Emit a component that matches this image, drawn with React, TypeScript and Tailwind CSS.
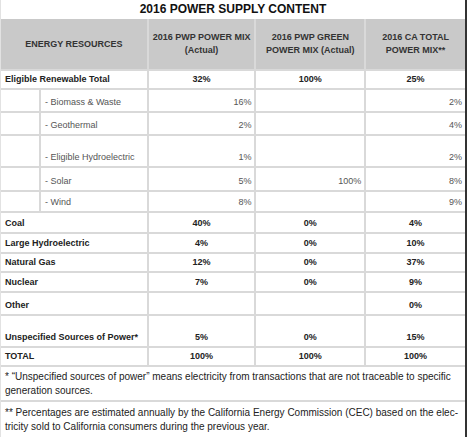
import React from "react";

type Row = {
  label: string;
  sub?: boolean;
  h: number;
  v: [string, string, string];
};

const rows: Row[] = [
  { label: "Eligible Renewable Total", h: 19, v: ["32%", "100%", "25%"] },
  { label: "- Biomass & Waste", sub: true, h: 23, v: ["16%", "", "2%"] },
  { label: "- Geothermal", sub: true, h: 23, v: ["2%", "", "4%"] },
  { label: "- Eligible Hydroelectric", sub: true, h: 32, v: ["1%", "", "2%"] },
  { label: "- Solar", sub: true, h: 24, v: ["5%", "100%", "8%"] },
  { label: "- Wind", sub: true, h: 21, v: ["8%", "", "9%"] },
  { label: "Coal", h: 21, v: ["40%", "0%", "4%"] },
  { label: "Large Hydroelectric", h: 20, v: ["4%", "0%", "10%"] },
  { label: "Natural Gas", h: 19, v: ["12%", "0%", "37%"] },
  { label: "Nuclear", h: 20, v: ["7%", "0%", "9%"] },
  { label: "Other", h: 23, v: ["", "", "0%"] },
  { label: "Unspecified Sources of Power*", h: 32, v: ["5%", "0%", "15%"] },
  { label: "TOTAL", h: 19, v: ["100%", "100%", "100%"] },
];

const line = "border-[#d9d9d9]";

const DataRow = ({ row }: { row: Row }) => {
  const cell = `flex items-end pb-[3px] leading-[11px] border-r-2 ${line}`;
  const valCls = row.sub
    ? "justify-end pr-[3px] text-[#555] font-normal"
    : "justify-center text-[#222] font-bold";
  return (
    <div className={`flex border-b-2 ${line}`} style={{ height: row.h }}>
      {row.sub ? (
        <>
          <div className={`w-[40px] ${cell}`} />
          <div className={`w-[108px] pl-[4px] text-[#555] ${cell}`}>{row.label}</div>
        </>
      ) : (
        <div className={`w-[148px] pl-[4px] font-bold text-[#222] ${cell}`}>{row.label}</div>
      )}
      <div className={`w-[108px] ${cell} ${valCls}`}>{row.v[0]}</div>
      <div className={`w-[110px] ${cell} ${valCls}`}>{row.v[1]}</div>
      <div className={`w-[99px] flex items-end pb-[3px] leading-[11px] ${valCls}`}>{row.v[2]}</div>
    </div>
  );
};

export default function App() {
  return (
    <div className="w-[474px] h-[437px] bg-white overflow-hidden font-['Liberation_Sans',Arial,sans-serif]">
      <div className="w-[467px] border-l border-[#e2e2e2]">
        <div className="border-r-2 border-[#333] text-[9px]">
          {/* Title */}
          <div className="h-[19px] flex items-center justify-center text-[12px] font-bold text-[#111] leading-[19px]">
            2016 POWER SUPPLY CONTENT
          </div>

          {/* Header */}
          <div className={`flex h-[52px] bg-[#c9c9c9] border-b-2 ${line} font-bold text-[#333] leading-[13px] text-center`}>
            <div className={`w-[148px] flex items-center justify-center border-r-2 ${line}`}>ENERGY RESOURCES</div>
            <div className={`w-[108px] flex items-center justify-center border-r-2 ${line}`}>
              2016 PWP POWER MIX
              <br />
              (Actual)
            </div>
            <div className={`w-[110px] flex items-center justify-center border-r-2 ${line}`}>
              2016 PWP GREEN
              <br />
              POWER MIX (Actual)
            </div>
            <div className="w-[99px] flex items-center justify-center">
              2016 CA TOTAL
              <br />
              POWER MIX**
            </div>
          </div>

          {rows.map((r) => (
            <DataRow key={r.label} row={r} />
          ))}

          {/* Footnotes */}
          <div className={`h-[35px] border-b-2 ${line} pl-[4px] pt-[3px] text-[10px] leading-[14px] text-[#222]`}>
            * “Unspecified sources of power” means electricity from transactions that are not traceable to specific generation sources.
          </div>
          <div className="h-[40px] pl-[4px] pt-[4px] text-[10px] leading-[14px] text-[#222]">
            ** Percentages are estimated annually by the California Energy Commission (CEC) based on the elec-tricity sold to California consumers during the previous year.
          </div>
        </div>
      </div>
    </div>
  );
}
